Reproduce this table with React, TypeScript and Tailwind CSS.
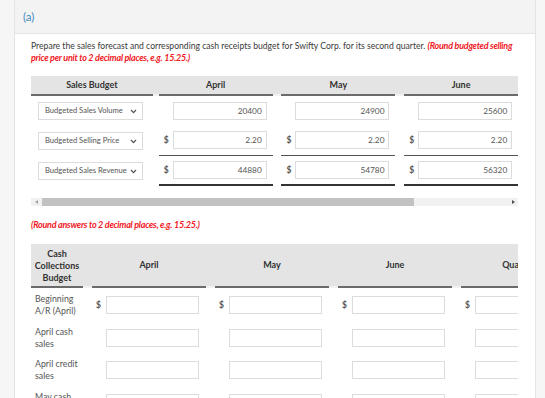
import React from "react";

const Chevron = () => (
  <svg width="7" height="5" viewBox="0 0 7 5" className="shrink-0">
    <polyline points="1,1 3.5,3.6 6,1" fill="none" stroke="#555" strokeWidth="1.3" />
  </svg>
);

const Select = ({ label }: { label: string }) => (
  <div className="ml-[7px] w-[105px] h-[18px] border border-[#dcdcdc] bg-white flex items-center justify-between pl-[6px] pr-[5px] text-[7.6px] text-[#555]">
    <span className="whitespace-nowrap">{label}</span>
    <Chevron />
  </div>
);

const ValInput = ({ value, dollar }: { value?: string; dollar?: boolean }) => (
  <div className="flex items-center h-[18px]">
    <span className="w-[14px] pl-[5px] text-[8.5px] text-[#555] font-bold">{dollar ? "$" : ""}</span>
    <div className="w-[94px] h-[18px] border border-[#dcdcdc] bg-white flex items-center justify-end pr-[4px] text-[8.3px] text-[#555]">
      {value}
    </div>
  </div>
);

const salesRows = [
  { label: "Budgeted Sales Volume", vals: ["20400", "24900", "25600"], dollar: false },
  { label: "Budgeted Selling Price", vals: ["2.20", "2.20", "2.20"], dollar: true },
  { label: "Budgeted Sales Revenue", vals: ["44880", "54780", "56320"], dollar: true },
];

const salesMonths = ["April", "May", "June"];
const months = ["April", "May", "June", "Quarter"];

const SalesTable = () => {
  const rowCls = [
    "pt-[6px] pb-[5px] border-b border-transparent",
    "pt-[5px] pb-[5px] border-b border-[#555]",
    "pt-[5px] pb-[5px] border-b-2 border-[#333]",
  ];
  return (
    <div className="mt-[12px] w-[487px] overflow-hidden">
      <div className="w-[487px]">
        <div className="flex h-[20px] bg-[#e4e4e4]">
          <div className="w-[122px] border-b-2 border-[#6b6b6b] flex items-center justify-center text-[9px] font-bold text-[#333]">Sales Budget</div>
          <div className="w-[6px] border-b-2 border-[#f2f2f2]" />
          {salesMonths.map((m, i) => (
            <React.Fragment key={m}>
              {i > 0 && <div className="w-[9px] border-b-2 border-[#f2f2f2]" />}
              <div className="w-[114px] border-b-2 border-[#6b6b6b] flex items-center justify-center text-[9px] font-bold text-[#333]">{m}</div>
            </React.Fragment>
          ))}
        </div>
        {salesRows.map((r, ri) => (
          <div key={r.label} className="flex">
            <div className={`w-[122px] ${rowCls[0]}`}>
              <Select label={r.label} />
            </div>
            <div className="w-[6px]" />
            {r.vals.map((v, i) => (
              <React.Fragment key={i}>
                {i > 0 && <div className="w-[9px]" />}
                <div className={`w-[114px] ${rowCls[ri]}`}>
                  <ValInput value={v} dollar={r.dollar} />
                </div>
              </React.Fragment>
            ))}
          </div>
        ))}
      </div>
    </div>
  );
};

const Scrollbar = () => (
  <div className="mt-[12px] w-[487px] h-[8px] bg-[#f1f1f1] flex items-center">
    <div className="w-[10px] h-full flex items-center justify-center">
      <div className="w-0 h-0 border-t-[2.5px] border-b-[2.5px] border-r-[3px] border-t-transparent border-b-transparent border-r-[#a3a3a3]" />
    </div>
    <div className="flex-1 h-full">
      <div className="ml-[1px] w-[372px] h-full bg-[#c1c1c1]" />
    </div>
    <div className="w-[10px] h-full flex items-center justify-center">
      <div className="w-0 h-0 border-t-[2.5px] border-b-[2.5px] border-l-[3px] border-t-transparent border-b-transparent border-l-[#505050]" />
    </div>
  </div>
);

const cashRows = [
  ["Beginning", "A/R (April)"],
  ["April cash", "sales"],
  ["April credit", "sales"],
  ["May cash", "sales"],
];

const CashTable = () => (
  <div className="mt-[13px] w-[487px] overflow-hidden">
    <div className="w-[640px]">
      <div className="flex bg-[#e4e4e4]">
        <div className="w-[52px] border-b-2 border-[#6b6b6b] pt-[4px] pb-[2px] flex flex-col items-center text-[9px] leading-[12px] font-bold text-[#333]">
          <span>Cash</span>
          <span>Collections</span>
          <span>Budget</span>
        </div>
        {months.map((m) => (
          <React.Fragment key={m}>
            <div className="w-[9px] border-b-2 border-[#f2f2f2]" />
            <div className="w-[114px] border-b-2 border-[#6b6b6b] flex items-center justify-center text-[9px] font-bold text-[#333]">{m}</div>
          </React.Fragment>
        ))}
      </div>
      <div className="mt-[1px]">
        {cashRows.map((r, ri) => (
          <div key={ri} className="flex items-center h-[32.5px]">
            <div className="w-[52px] pl-[4px] flex flex-col text-[8.8px] leading-[12px] text-[#555]">
              <span className="whitespace-nowrap">{r[0]}</span>
              <span className="whitespace-nowrap">{r[1]}</span>
            </div>
            {months.map((m) => (
              <React.Fragment key={m}>
                <div className="w-[9px]" />
                <div className="w-[114px] flex items-center h-[18px]">
                  <span className="w-[14px] pl-[4px] text-[8.5px] text-[#555] font-bold">{ri === 0 ? "$" : ""}</span>
                  <div className="w-[93px] h-[18px] border border-[#dcdcdc] bg-white" />
                </div>
              </React.Fragment>
            ))}
          </div>
        ))}
      </div>
    </div>
  </div>
);

export default function App() {
  return (
    <div className="w-[545px] h-[398px] overflow-hidden bg-[#f6f6f6] flex font-['Lato',sans-serif]">
      <div className="ml-[14px] w-[522px] h-full bg-white border-l border-r border-[#e3e3e3] flex flex-col shrink-0">
        <div className="h-[34px] shrink-0 bg-[#f3f3f3] border-b border-[#e4e4e4] flex items-center pl-[8px] text-[11.5px] text-[#3f8cbf]">
          (a)
        </div>
        <div className="pl-[16px] pr-[16px] pt-[6px]">
          <p className="-mr-[4px] text-[8.6px] leading-[12px] text-[#3a3a3a]">
            Prepare the sales forecast and corresponding cash receipts budget for Swifty Corp. for its second quarter.{" "}
            <span className="text-[9px] tracking-[-0.25px] text-[#f0181e] font-bold italic">(Round budgeted selling price per unit to 2 decimal places, e.g. 15.25.)</span>
          </p>
          <SalesTable />
          <Scrollbar />
          <p className="mt-[13px] text-[9px] tracking-[-0.25px] leading-[12px] text-[#f0181e] font-bold italic">
            (Round answers to 2 decimal places, e.g. 15.25.)
          </p>
          <CashTable />
        </div>
      </div>
    </div>
  );
}
